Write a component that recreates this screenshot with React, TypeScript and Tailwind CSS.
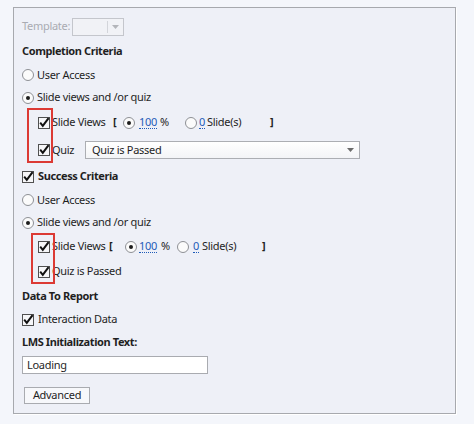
import React from 'react';

function Check() {
  return (
    <svg width="12" height="12" viewBox="0 0 12 12" className="shrink-0 overflow-visible">
      <rect x="0.5" y="0.5" width="11" height="11" fill="#f6f6f8" stroke="#505050" />
      <path d="M2.2 5.6 L4.8 8.8 L10.6 1.2" stroke="#111" strokeWidth="2" fill="none" />
    </svg>
  );
}

function Radio({ on }: { on?: boolean }) {
  return (
    <svg width="12" height="12" viewBox="0 0 12 12" className="shrink-0">
      <circle cx="6" cy="6" r="5.5" fill="#fbfbfb" stroke="#8d8f94" />
      {on && <circle cx="6" cy="6" r="2" fill="#1c1c1c" />}
    </svg>
  );
}

function Arrow({ color = '#6b6b6b' }: { color?: string }) {
  return (
    <svg width="7" height="4" viewBox="0 0 7 4" className="shrink-0">
      <path d="M0 0 L7 0 L3.5 4 Z" fill={color} />
    </svg>
  );
}

function Num({ v }: { v: string }) {
  return <span className="text-[#1e5bb8] border-b border-dotted border-[#1e5bb8] leading-[12px]">{v}</span>;
}

// fixed-width slot so each piece of a row lands where the dialog puts it
function Slot({ w, children }: { w: number; children: React.ReactNode }) {
  return (
    <span className="shrink-0 flex items-center" style={{ width: w }}>
      {children}
    </span>
  );
}

// "Slide Views [ (o) 100 %  ( ) 0 Slide(s)  ]"
function SlideRange({ w }: { w: number[] }) {
  return (
    <>
      <Slot w={w[0]}>Slide Views</Slot>
      <Slot w={w[1]}><span className="font-bold">[</span></Slot>
      <Slot w={w[2]}><Radio on /></Slot>
      <Slot w={w[3]}><Num v="100" /></Slot>
      <Slot w={w[4]}>%</Slot>
      <Slot w={w[5]}><Radio /></Slot>
      <Slot w={w[6]}><Num v="0" /></Slot>
      <Slot w={w[7]}>Slide(s)</Slot>
      <span className="font-bold">]</span>
    </>
  );
}

export default function App() {
  return (
    <div
      className="w-[474px] h-[424px] bg-[#f4f6fb] pt-[7px] pl-[13px] text-[11px] text-[#1f1f1f] tracking-[-0.3px]"
      style={{ fontFamily: '"Noto Sans", "Open Sans", sans-serif' }}
    >
      <div className="w-[443px] h-[407px] border border-[#a7a9ae] bg-[#eef0f7] pl-[8px] pt-[6px] shadow-[1px_1px_0_#ffffff]">
        {/* Template */}
        <div className="h-[25px] flex items-center">
          <Slot w={50}><span className="text-[#a9abb2]">Template:</span></Slot>
          <div className="w-[52px] h-[18px] border border-[#c4c6cc] bg-[#f1f2f6] flex items-center">
            <div className="flex-1" />
            <div className="w-px h-[12px] bg-[#d3d5da]" />
            <div className="w-[15px] flex justify-center">
              <Arrow color="#b3b5ba" />
            </div>
          </div>
        </div>

        {/* Completion Criteria */}
        <div className="h-[25px] flex items-center font-bold tracking-[-0.4px]">Completion Criteria</div>
        <div className="h-[22px] flex items-center gap-[3px]">
          <Radio />
          <span>User Access</span>
        </div>
        <div className="h-[23px] flex items-center gap-[3px]">
          <Radio on />
          <span>Slide views and /or quiz</span>
        </div>
        <div className="relative">
          <div className="h-[27px] flex items-center pl-[16px]">
            <Check />
            <span className="w-[2px]" />
            <SlideRange w={[61, 10, 16, 21, 25, 14, 8, 63]} />
          </div>
          <div className="h-[28px] flex items-center pl-[16px]">
            <Check />
            <span className="w-[2px]" />
            <Slot w={33}>Quiz</Slot>
            <div className="w-[275px] h-[18px] border border-[#acaeb3] bg-gradient-to-b from-[#ffffff] to-[#f3f4f7] flex items-center pl-[6px] pr-[5px]">
              <span className="flex-1">Quiz is Passed</span>
              <Arrow />
            </div>
          </div>
          <div className="absolute left-[5px] top-[-1px] w-[26px] h-[55px] border-2 border-[#dc3a34]" />
        </div>

        {/* Success Criteria */}
        <div className="h-[25px] flex items-center gap-[4px] font-bold tracking-[-0.4px]">
          <Check />
          <span>Success Criteria</span>
        </div>
        <div className="h-[22px] flex items-center gap-[3px]">
          <Radio />
          <span>User Access</span>
        </div>
        <div className="h-[23px] flex items-center gap-[3px]">
          <Radio on />
          <span>Slide views and /or quiz</span>
        </div>
        <div className="relative">
          <div className="h-[25px] flex items-center pl-[16px]">
            <Check />
            <span className="w-[2px]" />
            <SlideRange w={[57, 16, 14, 22, 16, 16, 9, 60]} />
          </div>
          <div className="h-[25px] flex items-center pl-[16px]">
            <Check />
            <span className="ml-[2px]">Quiz is Passed</span>
          </div>
          <div className="absolute left-[9px] top-[-1px] w-[24px] h-[51px] border-2 border-[#dc3a34]" />
        </div>

        {/* Data To Report */}
        <div className="h-[24px] flex items-center font-bold tracking-[-0.4px]">Data To Report</div>
        <div className="h-[23px] flex items-center gap-[4px]">
          <Check />
          <span>Interaction Data</span>
        </div>
        <div className="h-[23px] flex items-center font-bold tracking-[-0.4px]">LMS Initialization Text:</div>
        <div className="mt-[2px] w-[186px] h-[18px] border border-[#a9abb0] bg-white flex items-center pl-[4px]">Loading</div>
        <button className="mt-[13px] ml-[2px] w-[66px] h-[17px] border border-[#a9abb0] bg-[#f7f8fb] flex items-center justify-center">
          Advanced
        </button>
      </div>
    </div>
  );
}
